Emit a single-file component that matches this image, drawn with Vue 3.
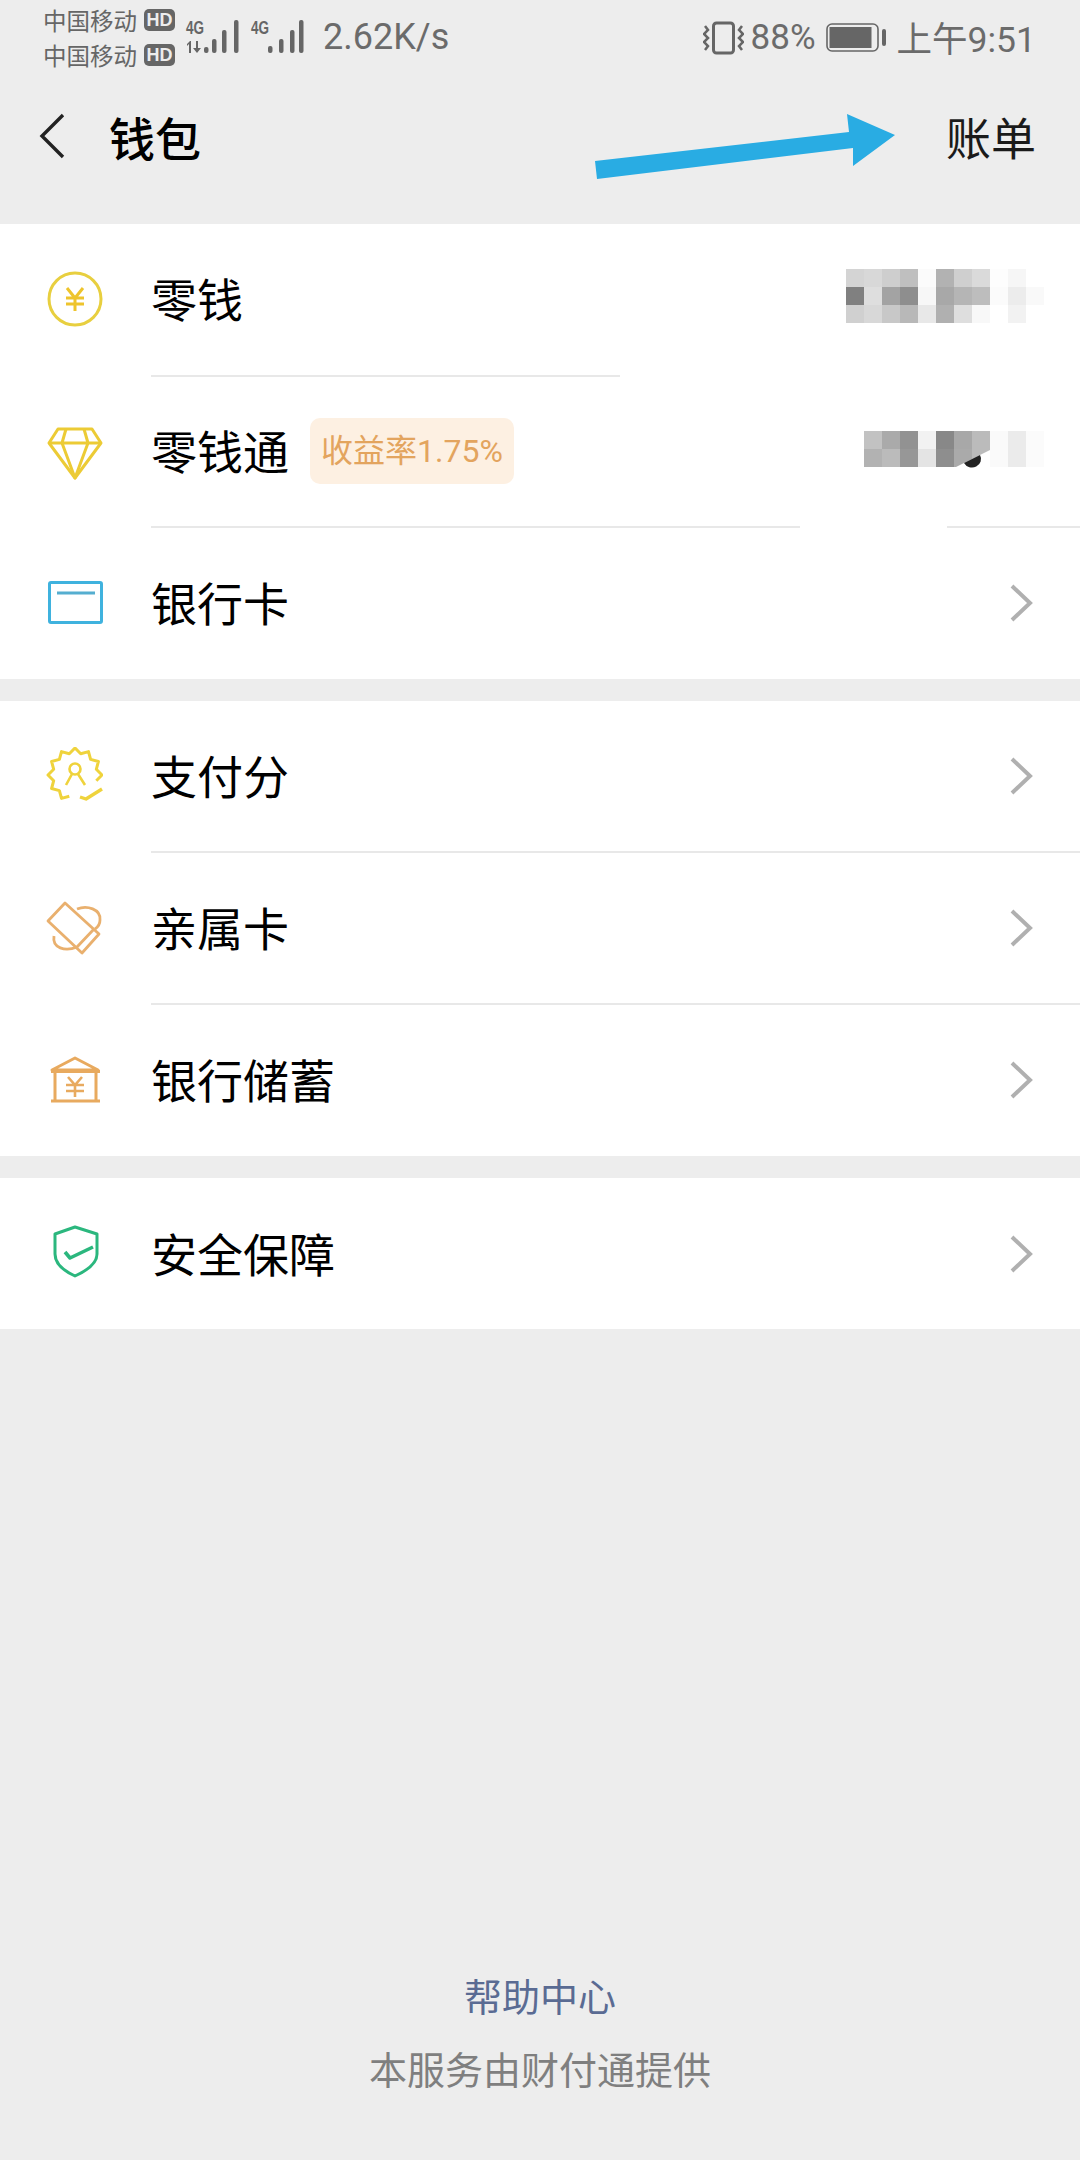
<script setup>
// 提现金额打码区域的色块
const balanceMosaic = [
  ['#d4d4d4', '#d8d8d8', '#cecece', '#bfbfbf', '#fbfbfb', '#b2b2b2', '#cfcfcf', '#dadada', '#fdfdfd', '#f6f6f6', '#ffffff'],
  ['#808080', '#dedede', '#a3a3a3', '#8e8e8e', '#f7f7f7', '#a8a8a8', '#b5b5b5', '#bdbdbd', '#fbfbfb', '#ececec', '#f9f9f9'],
  ['#d0d0d0', '#d8d8d8', '#c8c8c8', '#b8b8b8', '#e8e8e8', '#b0b0b0', '#dedede', '#f8f8f8', '#ffffff', '#f2f2f2', '#ffffff']
]
const fundMosaic = [
  ['#c2c2c2', '#aaaaaa', '#929292', '#f2f2f2', '#888888', '#a8a8a8', '#bbbbbb', '#fafafa', '#ebebeb', '#fbfbfb'],
  ['#b2b2b2', '#bbbbbb', '#979797', '#e4e4e4', '#8e8e8e', '#aaaaaa', '#bbbbbb', '#fafafa', '#ebebeb', '#fbfbfb']
]

// 支付分的锯齿外圈，右下角留出对勾的位置
const scoreBurst = (() => {
  const pts = []
  for (let i = 0; i <= 18; i++) {
    const a = ((i * 15 + 105) * Math.PI) / 180
    const r = i % 2 ? 27 : 22
    pts.push(`${(32 + r * Math.cos(a)).toFixed(1)} ${(28 + r * Math.sin(a)).toFixed(1)}`)
  }
  return 'M' + pts.join('L')
})()

const groups = [
  [
    { key: 'coin', label: '零钱', mosaic: balanceMosaic, patch: 'patch-wide' },
    { key: 'diamond', label: '零钱通', badge: '收益率1.75%', mosaic: fundMosaic, patch: 'patch-narrow', speck: true },
    { key: 'card', label: '银行卡', arrow: true }
  ],
  [
    { key: 'score', label: '支付分', arrow: true },
    { key: 'family', label: '亲属卡', arrow: true },
    { key: 'bank', label: '银行储蓄', arrow: true }
  ],
  [{ key: 'shield', label: '安全保障', arrow: true }]
]
</script>

<template>
  <div class="page">
    <div class="status-bar">
      <div class="carriers">
        <div v-for="n in 2" :key="n" class="carrier">
          <span>中国移动</span>
          <span class="hd">HD</span>
        </div>
      </div>
      <svg class="signal" width="118" height="36" viewBox="0 0 118 36">
        <g fill="#666">
          <text x="0" y="15" class="net" textLength="18" lengthAdjust="spacingAndGlyphs">4G</text>
          <text x="65" y="15" class="net" textLength="18" lengthAdjust="spacingAndGlyphs">4G</text>
          <path d="M3 34V25l-2 2v-2l3-3h1v12zM10 22h2v7h3l-4 5-4-5h3z" />
          <rect x="18" y="28" width="4.500" height="6" rx="2" />
          <rect x="26" y="20" width="4.500" height="14" rx="2" />
          <rect x="36" y="11" width="4.500" height="23" rx="2" />
          <rect x="48" y="1" width="4.500" height="33" rx="2" />
          <rect x="82" y="27" width="4.500" height="7" rx="2" />
          <rect x="93" y="20" width="4.500" height="14" rx="2" />
          <rect x="104" y="11" width="4.500" height="23" rx="2" />
          <rect x="113" y="1" width="4.500" height="33" rx="2" />
        </g>
      </svg>
      <span class="speed">2.62K/s</span>
      <div class="status-right">
        <svg class="vibrate" width="41" height="34" viewBox="0 0 41 34" fill="none" stroke="#666">
          <rect x="10.500" y="2" width="20" height="30" rx="3" stroke-width="3" />
          <path d="M2 5l3 4-4 4 4 4-4 4 4 4-3 4M39 5l-3 4 4 4-4 4 4 4-4 4 3 4" stroke-width="2.500" />
        </svg>
        <span class="battery-num">88%</span>
        <svg class="battery" width="60" height="29" viewBox="0 0 60 29">
          <rect x="1" y="1" width="51" height="27" rx="5" fill="none" stroke="#666" stroke-width="1.600" />
          <rect x="3.500" y="4" width="42" height="21" fill="#666" />
          <rect x="56" y="6" width="4" height="17" rx="2" fill="#666" />
        </svg>
        <span class="clock">上午9:51</span>
      </div>
    </div>

    <header class="nav">
      <svg class="back" width="26" height="46" viewBox="0 0 26 46" fill="none" stroke="#222" stroke-width="3.400">
        <path d="M24 2L3 23l21 21" />
      </svg>
      <h1 class="title">钱包</h1>
      <span class="bill">账单</span>
      <svg class="pointer" width="320" height="70" viewBox="0 0 320 70">
        <path d="M5 51L7 69 263 38 263 56 305 25 257 4 259 22Z" fill="#29ace3" />
      </svg>
    </header>

    <section v-for="(group, i) in groups" :key="i" class="group">
      <div v-for="item in group" :key="item.key" class="row">
        <svg class="icon" width="60" height="60" viewBox="0 0 60 60" fill="none">
          <g v-if="item.key === 'coin'">
            <circle cx="32" cy="29" r="26" stroke="#e8cf3f" stroke-width="3" />
            <path d="M24 18l8 10 8-10M23 28h18M23 34h18M32 28v13" stroke="#eec42c" stroke-width="3" />
          </g>
          <g v-else-if="item.key === 'diamond'" transform="translate(2 1)" stroke="#eccb35" stroke-width="3" stroke-linejoin="round">
            <path d="M13 7h34l9 14-26 35L4 21z" />
            <path d="M4 21h52M21 7l-4 14 13 35 13-35-4-14" />
          </g>
          <g v-else-if="item.key === 'card'">
            <rect x="6.500" y="9.500" width="52" height="40" rx="1.500" stroke="#3fb2de" stroke-width="3" />
            <path d="M14 20h38" stroke="#55aed0" stroke-width="3" />
          </g>
          <g v-else-if="item.key === 'score'" stroke="#efd33c" stroke-width="3" stroke-linejoin="round">
            <path :d="scoreBurst" />
            <path d="M37 50l6 2 16-10" stroke-width="3.400" />
            <circle cx="32" cy="22" r="5.500" stroke-width="2.600" />
            <path d="M29 27l-6 11M35 27l7 11" stroke-width="2.600" />
          </g>
          <g v-else-if="item.key === 'family'" stroke="#e9b06e" stroke-width="2.800" stroke-linejoin="round">
            <path d="M22 5L5 23l34 32 17-19z" />
            <path d="M51 31L34 49M34 11C44 7 58 11 57 22c0 4-2 7-5 9M11 38c-2 12 11 16 23 11" />
          </g>
          <g v-else-if="item.key === 'bank'" stroke="#e8aa5f" stroke-width="3">
            <path d="M9 20l23-12 23 12z" stroke-linejoin="round" />
            <path d="M8 21.500h49M12 21v29M53 21v29M8 51h49" />
            <path d="M25 27l7 8 7-8M23 35h18M23 41h18M32 35v12" stroke-width="2.600" />
          </g>
          <g v-else stroke="#2bb77e" stroke-width="3" stroke-linejoin="round">
            <path d="M32 4L12 11v20c0 10 9 17 20 22 11-5 22-12 22-22V11z" />
            <path d="M22 29l5 6 23-11" stroke-width="3.600" />
          </g>
        </svg>
        <div class="row-body">
          <span class="label">{{ item.label }}</span>
          <span v-if="item.badge" class="badge">{{ item.badge }}</span>
          <div v-if="item.mosaic" class="mosaic" :class="item.key">
            <div v-for="(line, l) in item.mosaic" :key="l" class="mosaic-line">
              <i v-for="(c, m) in line" :key="m" :style="{ background: c }"></i>
            </div>
          </div>
          <svg v-if="item.arrow" class="chevron" width="24" height="38" viewBox="0 0 24 38" fill="none" stroke="#b0b0b0" stroke-width="4">
            <path d="M3 2l18 17L3 36" />
          </svg>
        </div>
        <div v-if="item.patch" class="patch" :class="item.patch"></div>
        <svg v-if="item.speck" class="speck" width="44" height="24" viewBox="0 0 44 24">
          <path d="M4 20L40 2v18z" fill="#fff" />
          <path d="M14 15L30 7a8.500 8 0 0 1-16 8z" fill="#222" />
        </svg>
      </div>
    </section>

    <footer class="foot">
      <a class="help">帮助中心</a>
      <p class="provider">本服务由财付通提供</p>
    </footer>
  </div>
</template>

<style>
html,
body {
  margin: 0;
  background: #ededed;
}
</style>

<style scoped>
.page {
  width: 1080px;
  height: 2160px;
  display: flex;
  flex-direction: column;
  background: #ededed;
  font-family: "Noto Sans CJK SC", "Noto Sans", sans-serif;
  color: #000;
  overflow: hidden;
}

.status-bar {
  height: 75px;
  display: flex;
  align-items: center;
  padding: 0 44px 0 43px;
  color: #666;
}

.carriers {
  display: flex;
  flex-direction: column;
  gap: 7px;
  width: 143px;
}

.carrier {
  display: flex;
  align-items: center;
  height: 28px;
  font-size: 23.500px;
  line-height: 28px;
}

.hd {
  margin-left: 7px;
  padding: 0 2.500px;
  border-radius: 5px;
  background: #666;
  color: #ededed;
  font-family: "Liberation Sans", sans-serif;
  font-size: 18px;
  font-weight: 700;
  line-height: 22px;
}

.net {
  font-family: "Liberation Sans", sans-serif;
  font-size: 19px;
  font-weight: 700;
}

.signal {
  margin-top: -2px;
  overflow: visible;
}

.speed {
  margin: 0 0 2px 19px;
  font-family: Roboto, sans-serif;
  font-size: 36px;
  color: #6b6b6b;
}

.status-right {
  margin-left: auto;
  display: flex;
  align-items: center;
}

.battery-num {
  margin-left: 7px;
  font-family: Roboto, sans-serif;
  font-size: 35px;
  color: #6b6b6b;
}

.battery {
  margin-left: 10px;
}

.clock {
  margin: 0 0 3px 11px;
  font-family: Roboto, "Noto Sans CJK SC", sans-serif;
  font-size: 35.500px;
  color: #6b6b6b;
}

.nav {
  position: relative;
  height: 122px;
  margin-bottom: 27px;
  display: flex;
  align-items: center;
  padding: 0 44px 0 39px;
}

.title {
  margin: 0 0 0 44px;
  font-size: 46px;
  font-weight: 500;
}

.bill {
  margin-left: auto;
  font-size: 45px;
  color: #1a1a1a;
}

.pointer {
  position: absolute;
  left: 590px;
  top: 35px;
}

.group {
  background: #fff;
  margin-bottom: 22px;
}

.row {
  position: relative;
  display: flex;
  align-items: center;
  height: 151.600px;
  padding-left: 43px;
}

.icon {
  flex: none;
  margin-right: 48px;
}

.row-body {
  flex: 1;
  box-sizing: border-box;
  height: 152.600px;
  margin-top: 1px;
  display: flex;
  align-items: center;
  padding-right: 36px;
  border-bottom: 2px solid #e8e8e8;
}

.row:last-child .row-body {
  border-bottom: none;
}

.label {
  margin-bottom: 4px;
  font-size: 46px;
  line-height: 60px;
}

.badge {
  margin-left: 21px;
  height: 66px;
  padding: 0 11px;
  border-radius: 10px;
  background: #fdf0e2;
  color: #e3a45e;
  font-family: Roboto, "Noto Sans CJK SC", sans-serif;
  font-size: 32px;
  line-height: 66px;
}

.mosaic {
  margin-left: auto;
}

.mosaic.coin {
  margin-bottom: 6px;
}

.mosaic.diamond {
  margin-bottom: 4px;
}

.mosaic-line {
  display: flex;
  justify-content: flex-end;
}

.mosaic-line i {
  display: block;
  width: 18px;
  height: 18px;
}

.chevron {
  margin-left: auto;
  margin-right: 11px;
}

/* 涂抹盖住分割线的白色区域 */
.patch {
  position: absolute;
  bottom: -2px;
  height: 5px;
  background: #fff;
}

.patch-wide {
  left: 620px;
  right: 0;
}

.patch-narrow {
  left: 800px;
  width: 147px;
}

.speck {
  position: absolute;
  left: 950px;
  top: 72px;
}

.foot {
  margin-top: auto;
  padding-bottom: 67px;
  text-align: center;
}

.help {
  display: block;
  font-size: 38px;
  line-height: 50px;
  color: #5a6b93;
}

.provider {
  margin: 23px 0 0;
  font-size: 38px;
  line-height: 50px;
  color: #7f7f7f;
}
</style>
